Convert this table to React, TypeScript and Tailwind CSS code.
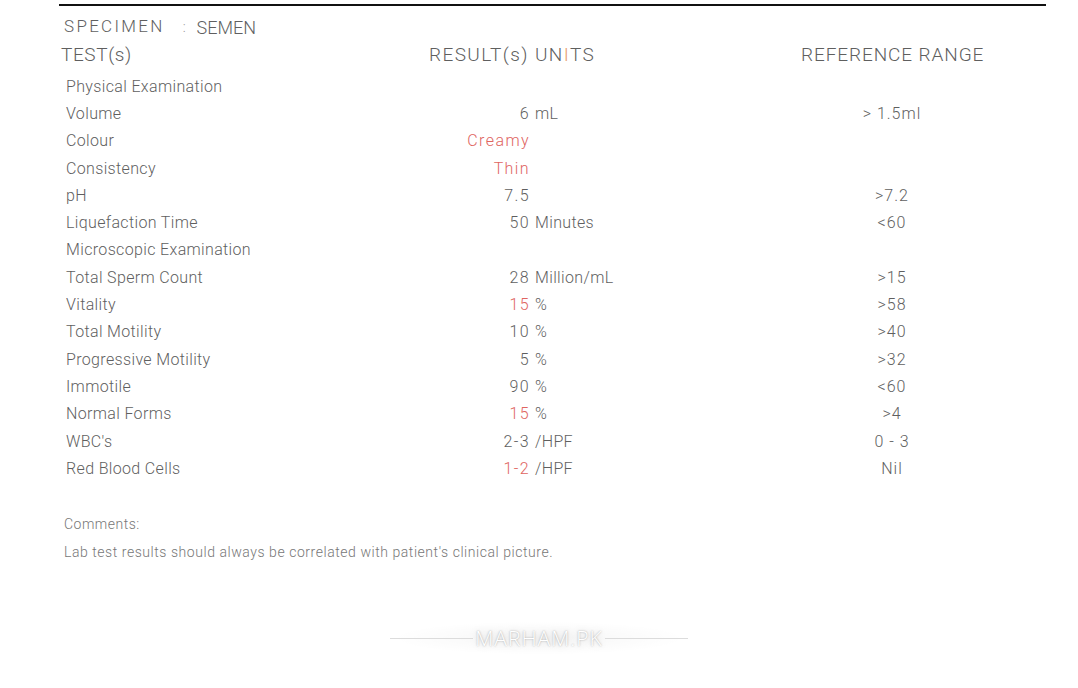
import React from "react";

type Row = {
  name: string;
  value?: string;
  unit?: string;
  range?: string;
  red?: boolean;
};

const rows: Row[] = [
  { name: "Physical Examination" },
  { name: "Volume", value: "6", unit: "mL", range: "> 1.5ml" },
  { name: "Colour", value: "Creamy", red: true },
  { name: "Consistency", value: "Thin", red: true },
  { name: "pH", value: "7.5", range: ">7.2" },
  { name: "Liquefaction Time", value: "50", unit: "Minutes", range: "<60" },
  { name: "Microscopic Examination" },
  { name: "Total Sperm Count", value: "28", unit: "Million/mL", range: ">15" },
  { name: "Vitality", value: "15", unit: "%", range: ">58", red: true },
  { name: "Total Motility", value: "10", unit: "%", range: ">40" },
  { name: "Progressive Motility", value: "5", unit: "%", range: ">32" },
  { name: "Immotile", value: "90", unit: "%", range: "<60" },
  { name: "Normal Forms", value: "15", unit: "%", range: ">4", red: true },
  { name: "WBC's", value: "2-3", unit: "/HPF", range: "0 - 3" },
  { name: "Red Blood Cells", value: "1-2", unit: "/HPF", range: "Nil", red: true },
];

const ReportRow = ({ name, value, unit, range, red }: Row) => {
  return (
    <div className="flex h-[27.3px] items-center text-[16px] tracking-[0.35px]">
      <div className="w-[388px] shrink-0 pl-[7px]">{name}</div>
      <div className={`w-[83px] shrink-0 text-right tracking-[1.4px] ${red ? "text-[#e0655f]" : ""}`}>
        {value}
      </div>
      <div className="w-[152px] shrink-0 pl-[5px]">{unit}</div>
      <div className="w-[420px] shrink-0 text-center tracking-[1px]">{range}</div>
    </div>
  );
};

export default function App() {
  return (
    <div
      className="relative h-[688px] w-[1078px] overflow-hidden bg-white text-[#5f5f5f] font-light"
      style={{ fontFamily: "Roboto, 'Liberation Sans', sans-serif" }}
    >
      <div className="ml-[59px] mt-[4px] w-[987px] border-t-2 border-[#111]" />

      <div className="ml-[59px] flex w-[1019px] flex-col">
        <div className="flex h-[38px] items-center pl-[5px] pt-[4px] text-[17px]">
          <span className="tracking-[2.3px]">SPECIMEN</span>
          <span className="ml-[18px] text-[14px] text-[#999]">:</span>
          <span className="ml-[11px] text-[18px]">SEMEN</span>
        </div>
        <div className="flex h-[22px] items-center text-[19px] tracking-[0.6px]">
          <div className="w-[370px] shrink-0 pl-[2px]">TEST(s)</div>
          <div className="w-[372px] shrink-0 tracking-[1.4px]">
            RESULT(s) UN<span className="text-[#e8a070]">I</span>TS
          </div>
          <div className="tracking-[0.9px]">REFERENCE RANGE</div>
        </div>
        <div className="mt-[7px]">
          {rows.map((r) => (
            <ReportRow key={r.name} {...r} />
          ))}
        </div>

        <div className="mt-[32px] pl-[5px] text-[14px] tracking-[0.5px] text-[#777]">Comments:</div>
        <div className="mt-[7px] pl-[5px] text-[14px] tracking-[0.55px] text-[#777]">
          Lab test results should always be correlated with patient's clinical picture.
        </div>
      </div>

      <div className="mt-[58px] ml-[390px] flex h-[34px] w-[298px] items-center bg-[radial-gradient(ellipse_at_center,rgba(0,0,0,0.04),rgba(0,0,0,0)_70%)]">
        <div className="h-px flex-1 bg-[#dcdcdc]" />
        <div
          className="px-[2px] text-[21px] tracking-[1px] text-white"
          style={{
            textShadow: "0 0 2px rgba(0,0,0,0.35), 0 0 8px rgba(0,0,0,0.15)",
            fontFamily: "'Open Sans', sans-serif",
          }}
        >
          MARHAM.PK
        </div>
        <div className="h-px flex-1 bg-[#dcdcdc]" />
      </div>
    </div>
  );
}
